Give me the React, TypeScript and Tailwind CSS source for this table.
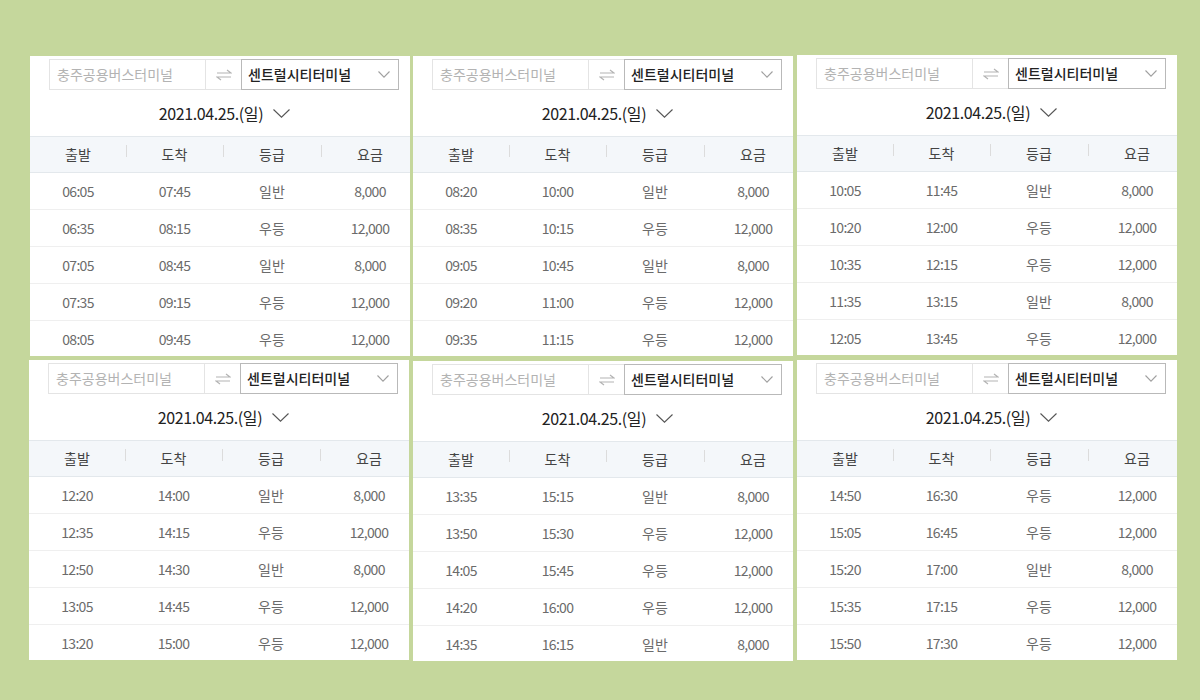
import React from 'react';

type Row = [string, string, string, string];

const FONT = { fontFamily: '"Noto Sans CJK KR", "Noto Sans", sans-serif' };

const panels: { rows: Row[]; className: string }[] = [
  {
    className: '',
    rows: [
      ['06:05', '07:45', '일반', '8,000'],
      ['06:35', '08:15', '우등', '12,000'],
      ['07:05', '08:45', '일반', '8,000'],
      ['07:35', '09:15', '우등', '12,000'],
      ['08:05', '09:45', '우등', '12,000'],
    ],
  },
  {
    className: '',
    rows: [
      ['08:20', '10:00', '일반', '8,000'],
      ['08:35', '10:15', '우등', '12,000'],
      ['09:05', '10:45', '일반', '8,000'],
      ['09:20', '11:00', '우등', '12,000'],
      ['09:35', '11:15', '우등', '12,000'],
    ],
  },
  {
    className: '-mt-[1px]',
    rows: [
      ['10:05', '11:45', '일반', '8,000'],
      ['10:20', '12:00', '우등', '12,000'],
      ['10:35', '12:15', '우등', '12,000'],
      ['11:35', '13:15', '일반', '8,000'],
      ['12:05', '13:45', '우등', '12,000'],
    ],
  },
];

const panels2: { rows: Row[]; className: string }[] = [
  {
    className: '',
    rows: [
      ['12:20', '14:00', '일반', '8,000'],
      ['12:35', '14:15', '우등', '12,000'],
      ['12:50', '14:30', '일반', '8,000'],
      ['13:05', '14:45', '우등', '12,000'],
      ['13:20', '15:00', '우등', '12,000'],
    ],
  },
  {
    className: 'mt-[1px]',
    rows: [
      ['13:35', '15:15', '일반', '8,000'],
      ['13:50', '15:30', '우등', '12,000'],
      ['14:05', '15:45', '우등', '12,000'],
      ['14:20', '16:00', '우등', '12,000'],
      ['14:35', '16:15', '일반', '8,000'],
    ],
  },
  {
    className: '',
    rows: [
      ['14:50', '16:30', '우등', '12,000'],
      ['15:05', '16:45', '우등', '12,000'],
      ['15:20', '17:00', '일반', '8,000'],
      ['15:35', '17:15', '우등', '12,000'],
      ['15:50', '17:30', '우등', '12,000'],
    ],
  },
];

function SwapIcon() {
  return (
    <svg width="16" height="12" viewBox="0 0 16 12" fill="none" stroke="#b4b4b4" strokeWidth="1.2">
      <path d="M1 4h14L11 1" />
      <path d="M15 8H1l4 3" />
    </svg>
  );
}

function Chevron({ w, h, color }: { w: number; h: number; color: string }) {
  return (
    <svg width={w} height={h} viewBox={`0 0 ${w} ${h}`} fill="none" stroke={color} strokeWidth="1.1">
      <path d={`M0.5 0.5L${w / 2} ${h - 0.8}L${w - 0.5} 0.5`} />
    </svg>
  );
}

function Panel({ rows, className }: { rows: Row[]; className: string }) {
  return (
    <div className={`w-[380px] h-[300px] bg-white overflow-hidden shrink-0 ${className}`}>
      <div className="w-[389px]">
        {/* terminals */}
        <div className="flex h-[31px] mt-[3px] ml-[19px] w-[350px] text-[14px]">
          <div className="w-[157px] border border-[#e4e4e4] flex items-center pl-[7px] text-[#b3b3b3]">
            충주공용버스터미널
          </div>
          <div className="w-[35px] border-y border-[#e4e4e4] flex items-center justify-center">
            <SwapIcon />
          </div>
          <div className="flex-1 border border-[#b9b9b9] flex items-center justify-between pl-[6px] pr-[8px] text-[#222] font-medium">
            센트럴시티터미널
            <Chevron w={12} h={7} color="#a0a0a0" />
          </div>
        </div>

        {/* date */}
        <div className="h-[46px] flex items-center justify-center gap-[10px] text-[16px] text-[#222]">
          <span className="tracking-[-0.4px]">2021.04.25.(일)</span>
          <Chevron w={17} h={9} color="#555" />
        </div>

        {/* header */}
        <div className="grid grid-cols-[96px_97px_98px_98px] h-[37px] bg-[#f4f7fa] border-y border-[#e3e8ec] text-[14px] text-[#444] items-center">
          {['출발', '도착', '등급', '요금'].map((h, i) => (
            <div key={h} className="relative text-center">
              {i > 0 && <span className="absolute left-0 top-[1px] h-[12px] w-px bg-[#dcdcdc]" />}
              {h}
            </div>
          ))}
        </div>

        {rows.map((r, i) => (
          <div
            key={i}
            className="grid grid-cols-[96px_97px_98px_98px] h-[37px] border-b border-[#efefef] items-center text-[14px] text-[#6b6b6b]"
          >
            {r.map((c, j) => (
              <div key={j} className={j === 2 ? 'text-center' : 'text-center tracking-[-0.7px]'}>
                {c}
              </div>
            ))}
          </div>
        ))}
      </div>
    </div>
  );
}

export default function App() {
  return (
    <div className="w-[1200px] h-[700px] bg-[#c5d79c] pt-[56px]" style={FONT}>
      <div className="flex ml-[30px] gap-[3px]">
        {panels.map((p, i) => (
          <div key={i} className={i === 2 ? 'ml-[1px]' : ''}>
            <Panel rows={p.rows} className={p.className} />
          </div>
        ))}
      </div>
      <div className="flex ml-[29px] gap-[4px] mt-[4px]">
        {panels2.map((p, i) => (
          <Panel key={i} rows={p.rows} className={p.className} />
        ))}
      </div>
    </div>
  );
}
